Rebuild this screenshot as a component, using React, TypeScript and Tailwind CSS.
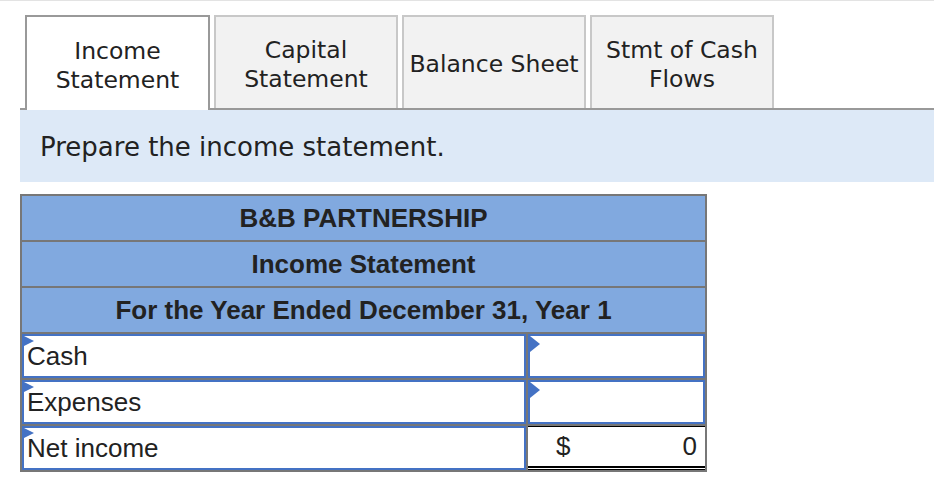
import React from "react";

const tabs = [
  { label: ["Income", "Statement"], active: true },
  { label: ["Capital", "Statement"], active: false },
  { label: ["Balance Sheet"], active: false },
  { label: ["Stmt of Cash", "Flows"], active: false },
];

const headerRows = [
  "B&B PARTNERSHIP",
  "Income Statement",
  "For the Year Ended December 31, Year 1",
];

function Flag({ tall }: { tall?: boolean }) {
  const h = tall ? 16 : 10;
  return (
    <svg
      className="absolute left-0 top-0"
      width="10"
      height={h}
      viewBox={`0 0 10 ${h}`}
    >
      <polygon points={`0,0 10,${h / 2} 0,${h}`} fill="#4472c4" />
    </svg>
  );
}

function LabelCell({ text }: { text: string }) {
  return (
    <div className="relative flex h-[44px] items-center border-2 border-[#4472c4] bg-white pl-[3px] pt-[1px] text-[26px] text-[#222]">
      <Flag />
      {text}
    </div>
  );
}

function InputCell() {
  return (
    <div className="relative h-[44px] border-2 border-[#4472c4] bg-white">
      <Flag tall />
    </div>
  );
}

function TotalCell({ value }: { value: string }) {
  return (
    <div className="flex h-[44px] flex-col bg-white text-[26px] text-[#222]">
      <div className="h-[2px] bg-black" />
      <div className="flex flex-1 items-center justify-between pl-[28px] pr-[8px]">
        <span>$</span>
        <span>{value}</span>
      </div>
      <div className="h-[2px] bg-black" />
      <div className="h-[2px] bg-white" />
      <div className="h-[2px] bg-black" />
    </div>
  );
}

export default function App() {
  return (
    <div className="h-[478px] w-[934px] overflow-hidden border-t border-[#e3e3e3] bg-white">
      <div
        className="ml-[20px] mt-[14px] flex items-end gap-[4px] border-b-2 border-[#999] pl-[5px]"
        style={{ fontFamily: '"DejaVu Sans", Verdana, sans-serif' }}
      >
        {tabs.map((tab, i) => (
          <div
            key={i}
            className={
              tab.active
                ? "-mb-[2px] flex h-[95px] w-[185px] flex-col items-center justify-center border-2 border-b-0 border-[#999] bg-white pt-[4px] text-[23.5px] leading-[29px] text-[#222]"
                : "flex h-[93px] w-[184px] flex-col items-center justify-center border-2 border-b-0 border-[#c8c8c8] bg-[#f2f2f2] pt-[4px] text-[23.5px] leading-[29px] text-[#222]"
            }
          >
            {tab.label.map((l) => (
              <span key={l}>{l}</span>
            ))}
          </div>
        ))}
      </div>

      <div
        className="ml-[20px] flex h-[72px] items-center bg-[#dde9f7] pl-[20px] pt-[3px] text-[26px] text-[#222]"
        style={{ fontFamily: '"DejaVu Sans", Verdana, sans-serif' }}
      >
        Prepare the income statement.
      </div>

      <div
        className="ml-[20px] mt-[12px] grid w-[687px] grid-cols-[504px_177px] gap-[2px] bg-[#777] p-[2px]"
        style={{ fontFamily: '"Liberation Sans", Arial, sans-serif' }}
      >
        {headerRows.map((h) => (
          <div
            key={h}
            className="col-span-2 flex h-[44px] items-center justify-center bg-[#81a9df] pt-[1px] text-[26px] font-bold text-[#222]"
          >
            {h}
          </div>
        ))}
        <LabelCell text="Cash" />
        <InputCell />
        <LabelCell text="Expenses" />
        <InputCell />
        <LabelCell text="Net income" />
        <TotalCell value="0" />
      </div>
    </div>
  );
}
